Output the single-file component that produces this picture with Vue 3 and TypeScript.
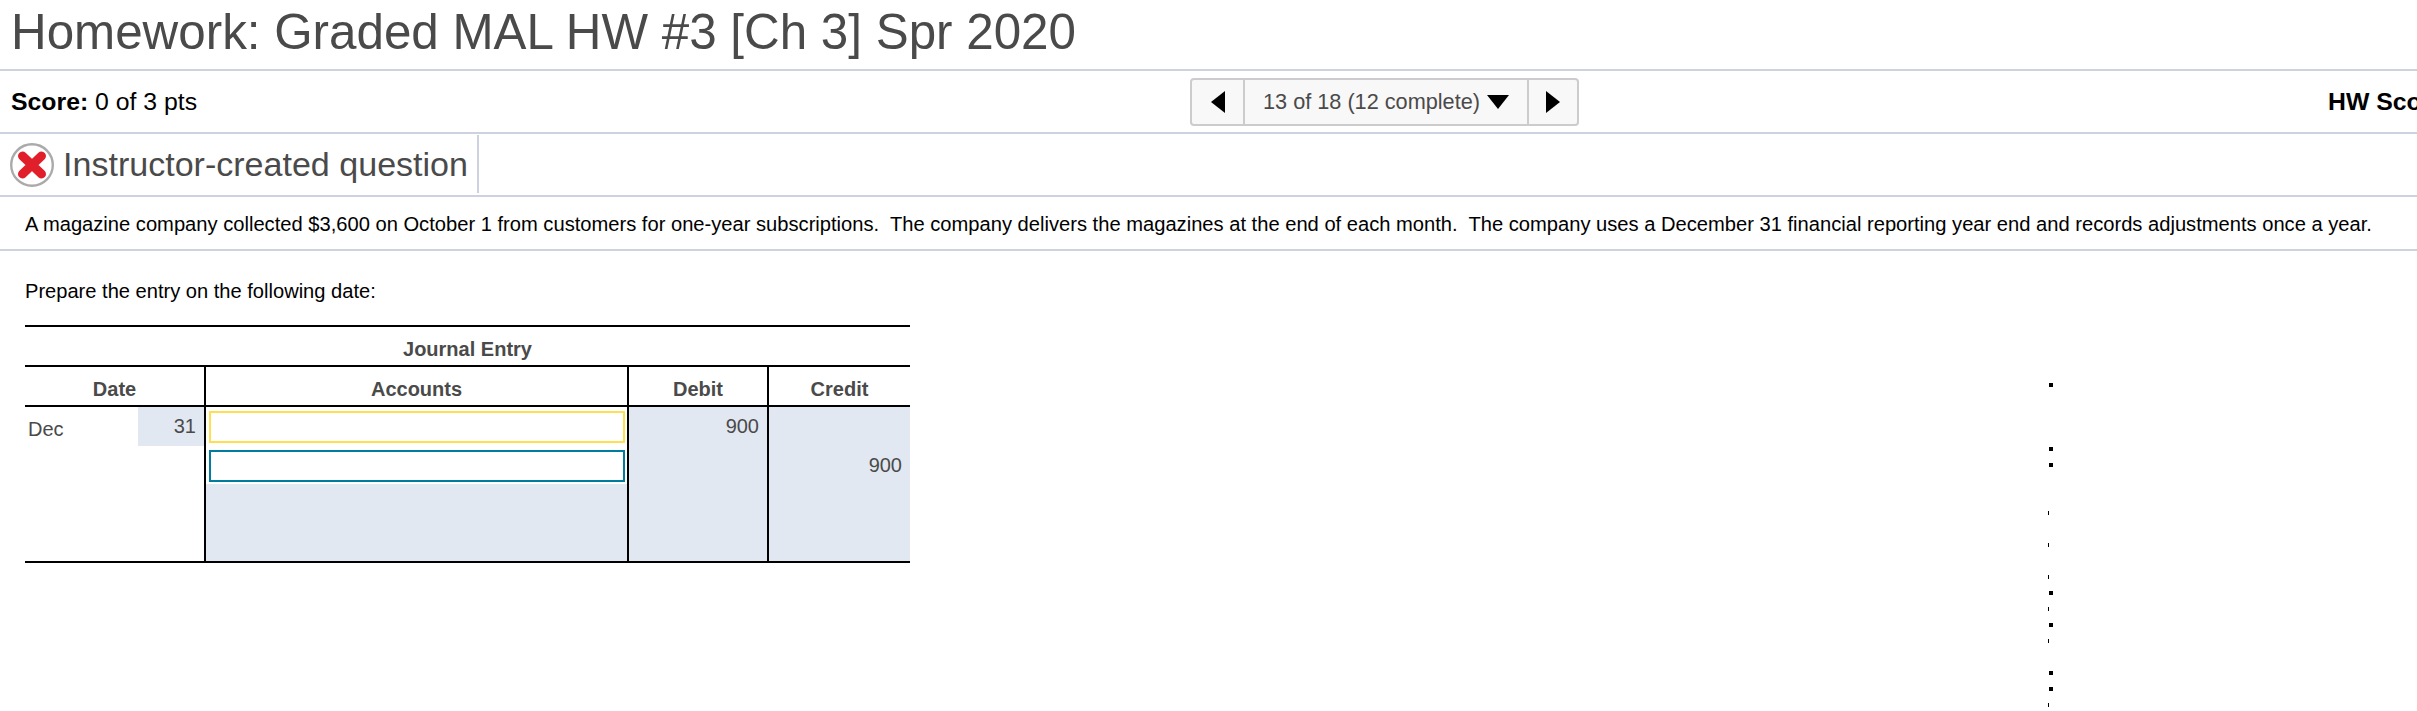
<script setup lang="ts">
const dots = [385, 449, 465, 593, 625, 673, 689]
const ticks = [513, 545, 577, 609, 641, 705]
</script>

<template>
  <div class="page">
    <h1 class="title">Homework: Graded MAL HW #3 [Ch 3] Spr 2020</h1>
    <div class="score-row">
      <div class="score"><b>Score:</b> 0 of 3 pts</div>
      <div class="nav">
        <div class="nav-arrow"><span class="tri tri-left"></span></div>
        <div class="nav-mid">13 of 18 (12 complete)<span class="tri tri-down"></span></div>
        <div class="nav-arrow nav-arrow-r"><span class="tri tri-right"></span></div>
      </div>
      <div class="hw"><b>HW Score: 66.67%, 12 of 18 pts</b></div>
    </div>
    <div class="q-row">
      <div class="q-head">
        <svg class="x-icon" width="44" height="44" viewBox="0 0 44 44">
          <circle cx="22" cy="22" r="20.8" fill="#fff" stroke="#aaa" stroke-width="2.4" />
          <path d="M12.5 13 L31.5 31 M31.5 13 L12.5 31" stroke="#e01f2b" stroke-width="9" stroke-linecap="round" fill="none" />
        </svg>
        <span class="q-label">Instructor-created question</span>
      </div>
    </div>
    <div class="prompt">A magazine company collected $3,600 on October 1 from customers for one-year subscriptions.&nbsp; The company delivers the magazines at the end of each month.&nbsp; The company uses a December 31 financial reporting year end and records adjustments once a year.</div>
    <div class="sub">Prepare the entry on the following date:</div>

    <div class="journal">
      <div class="j-title">Journal Entry</div>
      <div class="j-heads">
        <div class="h-date">Date</div>
        <div class="h-acc">Accounts</div>
        <div class="h-deb">Debit</div>
        <div class="h-cre">Credit</div>
      </div>
      <div class="j-body">
        <div class="c-date">
          <span class="month">Dec</span>
          <span class="day">31</span>
        </div>
        <div class="c-acc">
          <div class="inputs">
            <div class="inp inp-y"></div>
            <div class="inp inp-t"></div>
          </div>
        </div>
        <div class="c-deb"><span class="num">900</span></div>
        <div class="c-cre"><span class="num num-2">900</span></div>
      </div>
    </div>

    <i v-for="y in dots" :key="'d' + y" class="dot" :style="{ top: y - 2 + 'px' }"></i>
    <i v-for="y in ticks" :key="'t' + y" class="tick" :style="{ top: y - 2 + 'px' }"></i>
  </div>
</template>

<style>
html, body { margin: 0; background: #fff; overflow: hidden; }
</style>

<style scoped>
.page {
  position: relative;
  width: 2417px;
  height: 711px;
  overflow: hidden;
  background: #fff;
  font-family: "Liberation Sans", Arial, sans-serif;
  color: #000;
}
.title {
  margin: 0;
  height: 69px;
  padding-left: 11px;
  border-bottom: 2px solid #cdd1e0;
  font-size: 49.35px;
  font-weight: 400;
  line-height: 64px;
  color: #4a4a4a;
  box-sizing: content-box;
}
.score-row {
  display: flex;
  align-items: center;
  height: 61px;
  border-bottom: 2px solid #cdd1e0;
  overflow: hidden;
  padding-left: 11px;
  font-size: 24.8px;
}
.score { width: 1179px; flex: none; }
.nav {
  flex: none;
  display: flex;
  width: 389px;
  height: 48px;
  box-sizing: border-box;
  border: 2px solid #ccc;
  border-radius: 4px;
  background: #f8f8f8;
  color: #4a4a4a;
}
.nav-arrow {
  width: 51px;
  display: flex;
  align-items: center;
  justify-content: center;
}
.nav-arrow-r { width: 48px; }
.nav-mid {
  flex: 1;
  display: flex;
  align-items: center;
  justify-content: center;
  gap: 7px;
  font-size: 21.7px;
  border-left: 2px solid #ccc;
  border-right: 2px solid #ccc;
}
.tri { display: block; width: 0; height: 0; border-style: solid; border-color: transparent; }
.tri-left { border-width: 11px 14px 11px 0; border-right-color: #000; }
.tri-right { border-width: 11px 0 11px 14px; border-left-color: #000; }
.tri-down { border-width: 14px 11px 0 11px; border-top-color: #000; }
.hw { flex: none; margin-left: 749px; white-space: nowrap; }
.q-row {
  height: 61px;
  border-bottom: 2px solid #cdd1e0;
  display: flex;
  align-items: flex-start;
}
.q-head {
  display: flex;
  align-items: center;
  height: 58px;
  width: 479px;
  margin-top: 1px;
  padding-left: 10px;
  box-sizing: border-box;
  border-right: 2px solid #cdd1e0;
  white-space: nowrap;
}
.x-icon { flex: none; margin: 2px 9px 0 0; }
.q-label { font-size: 34.05px; color: #4a4a4a; }
.prompt {
  height: 54px;
  box-sizing: border-box;
  padding: 15px 0 0 25px;
  font-size: 20.15px;
  line-height: 24px;
  white-space: nowrap;
  border-bottom: 2px solid #cdd1e0;
}
.sub {
  padding: 28px 0 0 25px;
  font-size: 20.1px;
  line-height: 24px;
  height: 46px;
}
.journal {
  width: 885px;
  margin-left: 25px;
  color: #4a4a4a;
  font-size: 20px;
}
.j-title {
  height: 38px;
  line-height: 44px;
  text-align: center;
  font-weight: 700;
  border-top: 2px solid #000;
  border-bottom: 2px solid #000;
}
.j-heads, .j-body {
  display: grid;
  grid-template-columns: 181px 423px 140px 141px;
}
.j-heads {
  height: 38px;
  line-height: 44px;
  font-weight: 700;
  text-align: center;
  border-bottom: 2px solid #000;
}
.h-date, .h-acc, .h-deb { border-right: 2px solid #000; }
.j-body {
  height: 154px;
  border-bottom: 2px solid #000;
}
.c-date { display: flex; align-items: flex-start; border-right: 2px solid #000; }
.month { flex: 1; padding: 4px 0 0 3px; line-height: 36px; }
.day {
  width: 66px;
  height: 39px;
  box-sizing: border-box;
  background: #e2e8f2;
  text-align: right;
  padding-right: 8px;
  line-height: 39px;
}
.c-acc {
  border-right: 2px solid #000;
  background: #e2e8f2;
}
.inputs {
  background: #fff;
  height: 77px;
  box-sizing: border-box;
  padding: 4px 2px 0 3px;
  display: flex;
  flex-direction: column;
  gap: 7px;
}
.inp { height: 32px; box-sizing: border-box; background: #fff; }
.inp-y { border: 2px solid #ffdf50; }
.inp-t { border: 2px solid #007c9e; }
.c-deb, .c-cre {
  background: #e2e8f2;
  text-align: right;
}
.c-deb { border-right: 2px solid #000; padding-right: 8px; }
.c-cre { padding-right: 8px; }
.num { display: block; line-height: 39px; }
.num-2 { margin-top: 39px; }
.dot {
  position: absolute;
  left: 2049px;
  width: 4px;
  height: 4px;
  background: #000;
}
.tick {
  position: absolute;
  left: 2048px;
  width: 1px;
  height: 4px;
  background: #000;
}
</style>
